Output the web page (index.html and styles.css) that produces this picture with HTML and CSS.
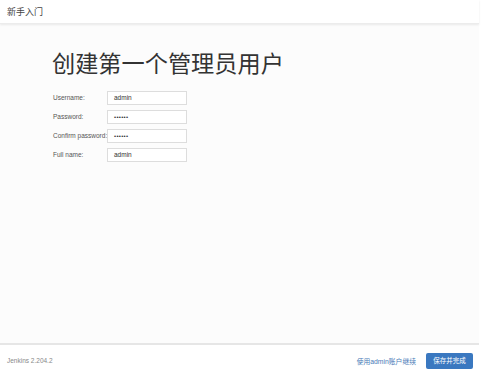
FILE: index.html
```html
<!DOCTYPE html>
<html>
    <head>
        <meta charset="UTF-8">
        <title>新手入门</title>
        <link rel="stylesheet" href="styles.css">
    </head>
    <body>
        <div id="wizard">
            <div class="head">新手入门</div>
            <div class="main">
                <h1>创建第一个管理员用户</h1>
                <div class="form">
                    <div class="row">
                        <label>Username:</label>
                        <div class="field">admin</div>
                    </div>
                    <div class="row">
                        <label>Password:</label>
                        <div class="field dots">••••••</div>
                    </div>
                    <div class="row">
                        <label>Confirm password:</label>
                        <div class="field dots">••••••</div>
                    </div>
                    <div class="row">
                        <label>Full name:</label>
                        <div class="field">admin</div>
                    </div>
                </div>
            </div>
            <div class="foot">
                <div class="ver">Jenkins 2.204.2</div>
                <div class="acts">
                    <a class="skip">使用admin账户继续</a>
                    <span class="save">保存并完成</span>
                </div>
            </div>
        </div>
    </body>
</html>
```
FILE: styles.css
```css
*{ margin:0; padding:0; font-family:"Liberation Sans","Noto Sans CJK SC",sans-serif;}
body{ background:#fff; }
#wizard{
    width: 479px;
    height: 376px;
    display: flex;
    flex-direction: column;
    background: #fcfcfc;
}
#wizard .head{
    height: 23px;
    line-height: 24px;
    padding-left: 7px;
    font-size: 9px;
    color: #444;
    background: #fff;
    box-shadow: 0 1px 2px rgba(0,0,0,.08);
    border-bottom: 1px solid #ececec;
}
#wizard .main{
    flex: 1;
    padding: 25px 0 0 52px;
}
#wizard h1{
    font-size: 23.2px;
    font-weight: normal;
    color: #333;
    line-height: 30px;
}
#wizard .form{
    margin-top: 9px;
    padding-left: 1px;
}
#wizard .row{
    display: flex;
    align-items: center;
    height: 19px;
}
#wizard .row label{
    width: 54px;
    font-size: 6.5px;
    color: #555;
    white-space: nowrap;
}
#wizard .field{
    width: 72px;
    height: 12px;
    line-height: 12px;
    padding-left: 6px;
    border: 1px solid #ddd;
    background: #fff;
    font-size: 6.5px;
    color: #333;
}
#wizard .field.dots{
    font-size: 6px;
    letter-spacing: 0.3px;
}
#wizard .foot{
    height: 31px;
    border-top: 2px solid #e6e6e6;
    background: #fff;
    display: flex;
    align-items: center;
    justify-content: space-between;
    padding: 0 6px 0 7px;
}
#wizard .ver{
    font-size: 6.5px;
    color: #888;
}
#wizard .acts{
    display: flex;
    align-items: center;
}
#wizard .skip{
    font-size: 6.8px;
    color: #4a7bb7;
    margin-right: 10px;
}
#wizard .save{
    display: block;
    width: 47px;
    height: 16px;
    line-height: 16px;
    text-align: center;
    font-size: 6.5px;
    color: #fff;
    background: #3a78c0;
    border-radius: 2px;
}
```
